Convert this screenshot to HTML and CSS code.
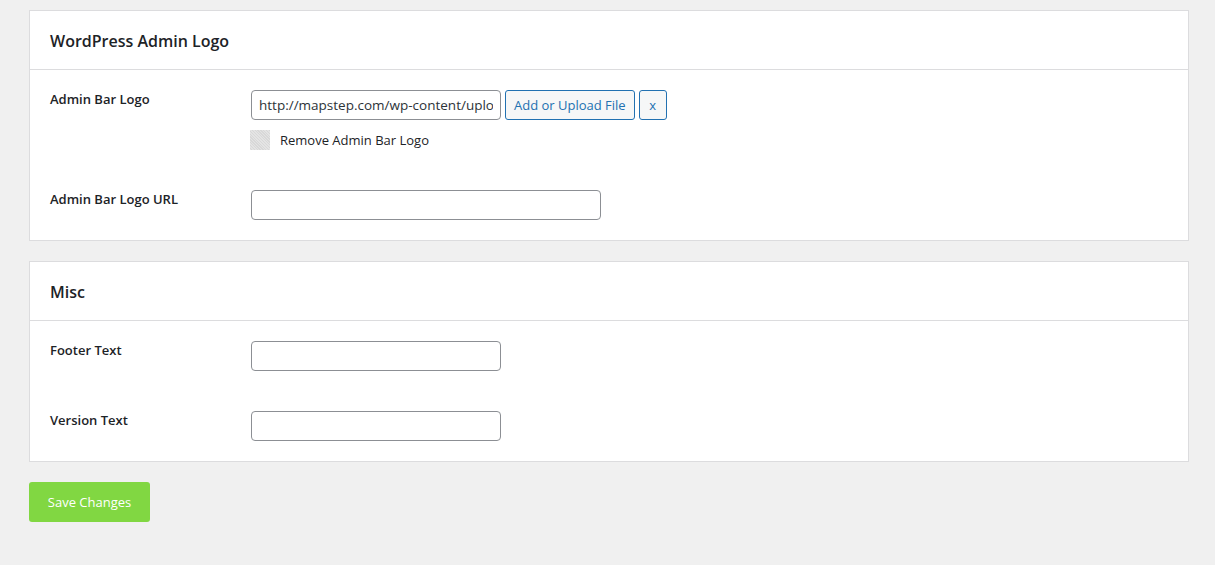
FILE: index.html
```html
<html>
<head>
<link rel="stylesheet" href="styles.css">
</head>
<body>
<div class="wrap">
	<div class="panel">
		<h2 class="panel-title">WordPress Admin Logo</h2>
		<div class="panel-body">
			<div class="row">
				<label class="field-label">Admin Bar Logo</label>
				<div class="field">
					<div class="upload">
						<input class="text" type="text" value="http://mapstep.com/wp-content/uploads/2020/logo.png">
						<button class="btn">Add or Upload File</button>
						<button class="btn btn-x">x</button>
					</div>
					<div class="check">
						<span class="checkbox"></span>
						<span>Remove Admin Bar Logo</span>
					</div>
				</div>
			</div>
			<div class="row">
				<label class="field-label">Admin Bar Logo URL</label>
				<div class="field">
					<input class="text text-wide" type="text">
				</div>
			</div>
		</div>
	</div>

	<div class="panel">
		<h2 class="panel-title">Misc</h2>
		<div class="panel-body">
			<div class="row">
				<label class="field-label">Footer Text</label>
				<div class="field">
					<input class="text" type="text">
				</div>
			</div>
			<div class="row">
				<label class="field-label">Version Text</label>
				<div class="field">
					<input class="text" type="text">
				</div>
			</div>
		</div>
	</div>

	<button class="save">Save Changes</button>
</div>
</body>
</html>
```

FILE: styles.css
```css
body {
	margin: 0;
	background: #f0f0f0;
	font-family: "Open Sans", "Noto Sans", sans-serif;
	color: #1d2327;
	font-size: 14px;
}
.wrap {
	padding: 10px 26px 0 29px;
}
.panel {
	background: #fff;
	border: 1px solid #dcdcde;
	margin-bottom: 20px;
}
.panel-title {
	margin: 0;
	font-size: 16px;
	font-weight: 600;
	padding: 0 20px;
	height: 58px;
	line-height: 60px;
	border-bottom: 1px solid #dcdcde;
}
.panel-body {
	padding: 20px 20px 0;
}
.row {
	display: flex;
	padding-bottom: 20px;
}
.row + .row {
	padding-top: 20px;
}
.field-label {
	width: 201px;
	font-weight: 600;
	font-size: 13px;
	line-height: 18px;
}
.field {
	display: flex;
	flex-direction: column;
	gap: 10px;
}
.upload {
	display: flex;
	gap: 4px;
}
.text {
	width: 250px;
	height: 30px;
	box-sizing: border-box;
	border: 1px solid #8c8f94;
	border-radius: 4px;
	padding: 0 7px;
	font-family: inherit;
	font-size: 13.5px;
	color: #2c3338;
}
.text-wide {
	width: 350px;
}
.btn {
	height: 30px;
	box-sizing: border-box;
	border: 1px solid #2271b1;
	border-radius: 3px;
	background: #f6f7f7;
	color: #2271b1;
	font-family: inherit;
	font-size: 13px;
	padding: 0 8px;
}
.btn-x {
	width: 28px;
	padding: 0;
}
.check {
	display: flex;
	align-items: center;
	gap: 10px;
	margin-left: -1px;
	font-size: 13px;
}
.checkbox {
	width: 20px;
	height: 20px;
	background: repeating-linear-gradient(45deg, #e4e4e4 0 1px, #d8d8d8 1px 2px);
}
.save {
	background: #81d742;
	color: #fff;
	border: none;
	border-radius: 3px;
	width: 121px;
	height: 40px;
	font-family: inherit;
	font-size: 13px;
}
```
